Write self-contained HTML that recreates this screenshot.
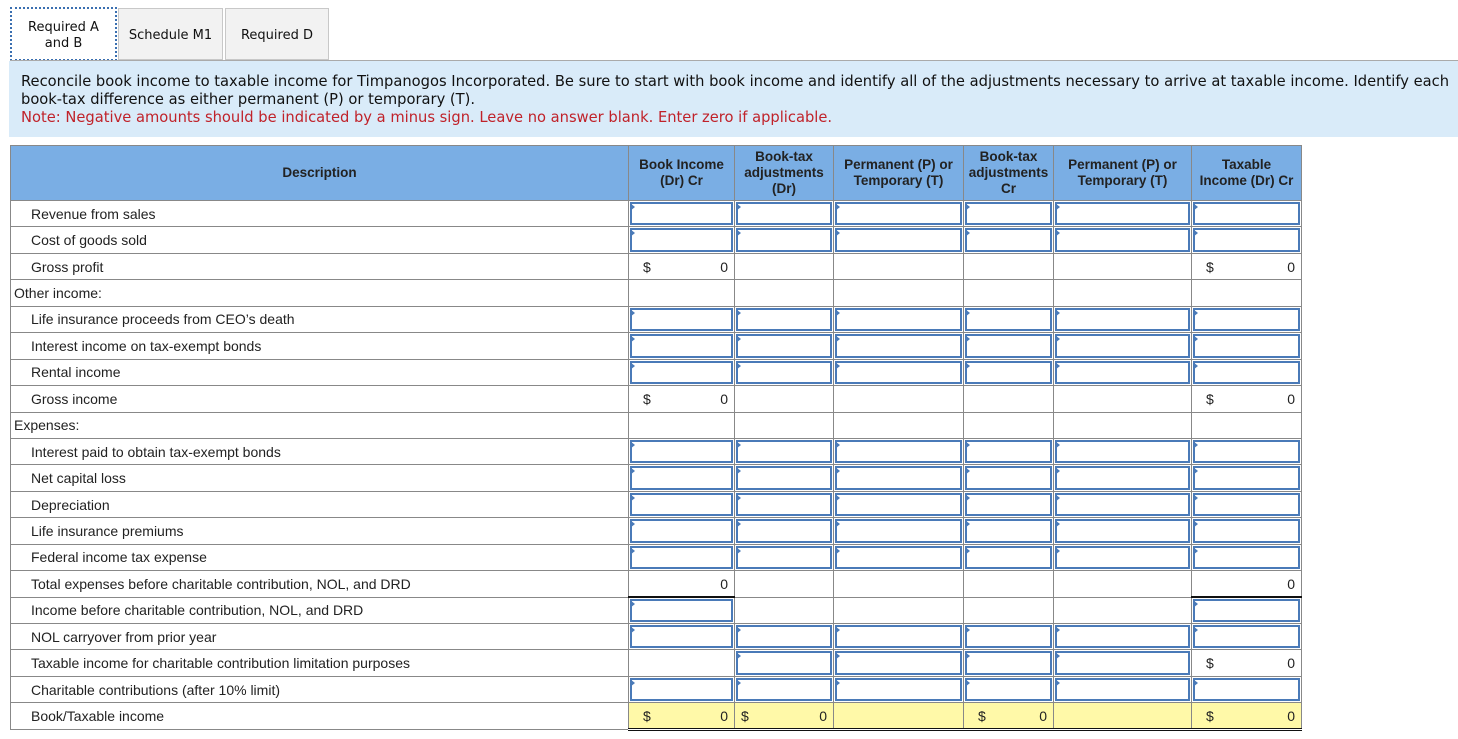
<!DOCTYPE html>
<html><head><meta charset="utf-8"><style>
body{margin:0;background:#fff;font-family:"Liberation Sans",Arial,sans-serif;width:1458px;height:739px;overflow:hidden;position:relative}
.tab{position:absolute;top:8px;height:52px;box-sizing:border-box;border:1px solid #c8c8c8;background:#f2f2f2;font-family:"DejaVu Sans",sans-serif;font-size:13px;display:flex;align-items:center;justify-content:center;text-align:center;line-height:16px;color:#111;padding-top:4px}
.t1{left:10px;width:107px;background:#fff;border:2px dotted #3a6fb0;height:54px;top:7px}
.t2{left:118px;width:105px}
.t3{left:225px;width:104px}
.line{position:absolute;left:10px;right:0;top:60px;height:1px;background:#aaa}
.info{position:absolute;left:9px;top:61px;width:1449px;height:76px;background:#d9ebf9;box-sizing:border-box;padding:12px 0 0 12px;font-family:"DejaVu Sans",sans-serif;font-size:14.7px;line-height:18px;color:#111;white-space:nowrap}
.info .n{color:#c0222a}
table{position:absolute;left:10px;top:145px;border-collapse:collapse;table-layout:fixed;font-size:14px}
th{background:#7aaee4;border:1px solid #888;font-size:13.5px;font-weight:bold;color:#222;line-height:16px;height:55px;padding:0;box-sizing:border-box}
td{border:1px solid #888;height:26.45px;padding:0;position:relative;color:#222;box-sizing:border-box}
td.d{padding-left:20px;font-size:14px}
td.s{padding-left:3px}
.in{position:absolute;left:1px;top:1px;right:1px;bottom:1px;border:2px solid #4a7ab8;background:#fff}
.in:before{content:"";position:absolute;left:-2px;top:-1px;border-left:5px solid #4a7ab8;border-top:4px solid transparent;border-bottom:4px solid transparent}
.v{display:flex;justify-content:space-between;padding:0 6px 0 14px}
td.y{background:#fff9a8;border-bottom:3px double #111}
td.tb{border-bottom:2px solid #111}
</style></head><body>
<div class="tab t1">Required A<br>and B</div>
<div class="tab t2">Schedule M1</div>
<div class="tab t3">Required D</div>
<div class="line"></div>
<div class="info">Reconcile book income to taxable income for Timpanogos Incorporated. Be sure to start with book income and identify all of the adjustments necessary to arrive at taxable income. Identify each<br>book-tax difference as either permanent (P) or temporary (T).<br><span class="n">Note: Negative amounts should be indicated by a minus sign. Leave no answer blank. Enter zero if applicable.</span></div>
<table>
<colgroup><col style="width:618px"><col style="width:106px"><col style="width:99px"><col style="width:130px"><col style="width:90px"><col style="width:138px"><col style="width:110px"></colgroup>
<tr><th>Description</th><th>Book Income<br>(Dr) Cr</th><th>Book-tax<br>adjustments<br>(Dr)</th><th>Permanent (P) or<br>Temporary (T)</th><th>Book-tax<br>adjustments<br>Cr</th><th>Permanent (P) or<br>Temporary (T)</th><th>Taxable<br>Income (Dr) Cr</th></tr>
<tr><td class="d">Revenue from sales</td><td><div class="in"></div></td><td><div class="in"></div></td><td><div class="in"></div></td><td><div class="in"></div></td><td><div class="in"></div></td><td><div class="in"></div></td></tr>
<tr><td class="d">Cost of goods sold</td><td><div class="in"></div></td><td><div class="in"></div></td><td><div class="in"></div></td><td><div class="in"></div></td><td><div class="in"></div></td><td><div class="in"></div></td></tr>
<tr><td class="d">Gross profit</td><td><div class="v"><span>$</span><span>0</span></div></td><td></td><td></td><td></td><td></td><td><div class="v"><span>$</span><span>0</span></div></td></tr>
<tr><td class="s">Other income:</td><td></td><td></td><td></td><td></td><td></td><td></td></tr>
<tr><td class="d">Life insurance proceeds from CEO’s death</td><td><div class="in"></div></td><td><div class="in"></div></td><td><div class="in"></div></td><td><div class="in"></div></td><td><div class="in"></div></td><td><div class="in"></div></td></tr>
<tr><td class="d">Interest income on tax-exempt bonds</td><td><div class="in"></div></td><td><div class="in"></div></td><td><div class="in"></div></td><td><div class="in"></div></td><td><div class="in"></div></td><td><div class="in"></div></td></tr>
<tr><td class="d">Rental income</td><td><div class="in"></div></td><td><div class="in"></div></td><td><div class="in"></div></td><td><div class="in"></div></td><td><div class="in"></div></td><td><div class="in"></div></td></tr>
<tr><td class="d">Gross income</td><td><div class="v"><span>$</span><span>0</span></div></td><td></td><td></td><td></td><td></td><td><div class="v"><span>$</span><span>0</span></div></td></tr>
<tr><td class="s">Expenses:</td><td></td><td></td><td></td><td></td><td></td><td></td></tr>
<tr><td class="d">Interest paid to obtain tax-exempt bonds</td><td><div class="in"></div></td><td><div class="in"></div></td><td><div class="in"></div></td><td><div class="in"></div></td><td><div class="in"></div></td><td><div class="in"></div></td></tr>
<tr><td class="d">Net capital loss</td><td><div class="in"></div></td><td><div class="in"></div></td><td><div class="in"></div></td><td><div class="in"></div></td><td><div class="in"></div></td><td><div class="in"></div></td></tr>
<tr><td class="d">Depreciation</td><td><div class="in"></div></td><td><div class="in"></div></td><td><div class="in"></div></td><td><div class="in"></div></td><td><div class="in"></div></td><td><div class="in"></div></td></tr>
<tr><td class="d">Life insurance premiums</td><td><div class="in"></div></td><td><div class="in"></div></td><td><div class="in"></div></td><td><div class="in"></div></td><td><div class="in"></div></td><td><div class="in"></div></td></tr>
<tr><td class="d">Federal income tax expense</td><td><div class="in"></div></td><td><div class="in"></div></td><td><div class="in"></div></td><td><div class="in"></div></td><td><div class="in"></div></td><td><div class="in"></div></td></tr>
<tr><td class="d">Total expenses before charitable contribution, NOL, and DRD</td><td class="tb"><div class="v"><span></span><span>0</span></div></td><td></td><td></td><td></td><td></td><td class="tb"><div class="v"><span></span><span>0</span></div></td></tr>
<tr><td class="d">Income before charitable contribution, NOL, and DRD</td><td><div class="in"></div></td><td></td><td></td><td></td><td></td><td><div class="in"></div></td></tr>
<tr><td class="d">NOL carryover from prior year</td><td><div class="in"></div></td><td><div class="in"></div></td><td><div class="in"></div></td><td><div class="in"></div></td><td><div class="in"></div></td><td><div class="in"></div></td></tr>
<tr><td class="d">Taxable income for charitable contribution limitation purposes</td><td></td><td><div class="in"></div></td><td><div class="in"></div></td><td><div class="in"></div></td><td><div class="in"></div></td><td><div class="v"><span>$</span><span>0</span></div></td></tr>
<tr><td class="d">Charitable contributions (after 10% limit)</td><td><div class="in"></div></td><td><div class="in"></div></td><td><div class="in"></div></td><td><div class="in"></div></td><td><div class="in"></div></td><td><div class="in"></div></td></tr>
<tr><td class="d">Book/Taxable income</td><td class="y"><div class="v"><span>$</span><span>0</span></div></td><td class="y"><div class="v" style="padding-left:6px"><span>$</span><span>0</span></div></td><td class="y"></td><td class="y"><div class="v"><span>$</span><span>0</span></div></td><td class="y"></td><td class="y"><div class="v"><span>$</span><span>0</span></div></td></tr>
</table>
</body></html>
